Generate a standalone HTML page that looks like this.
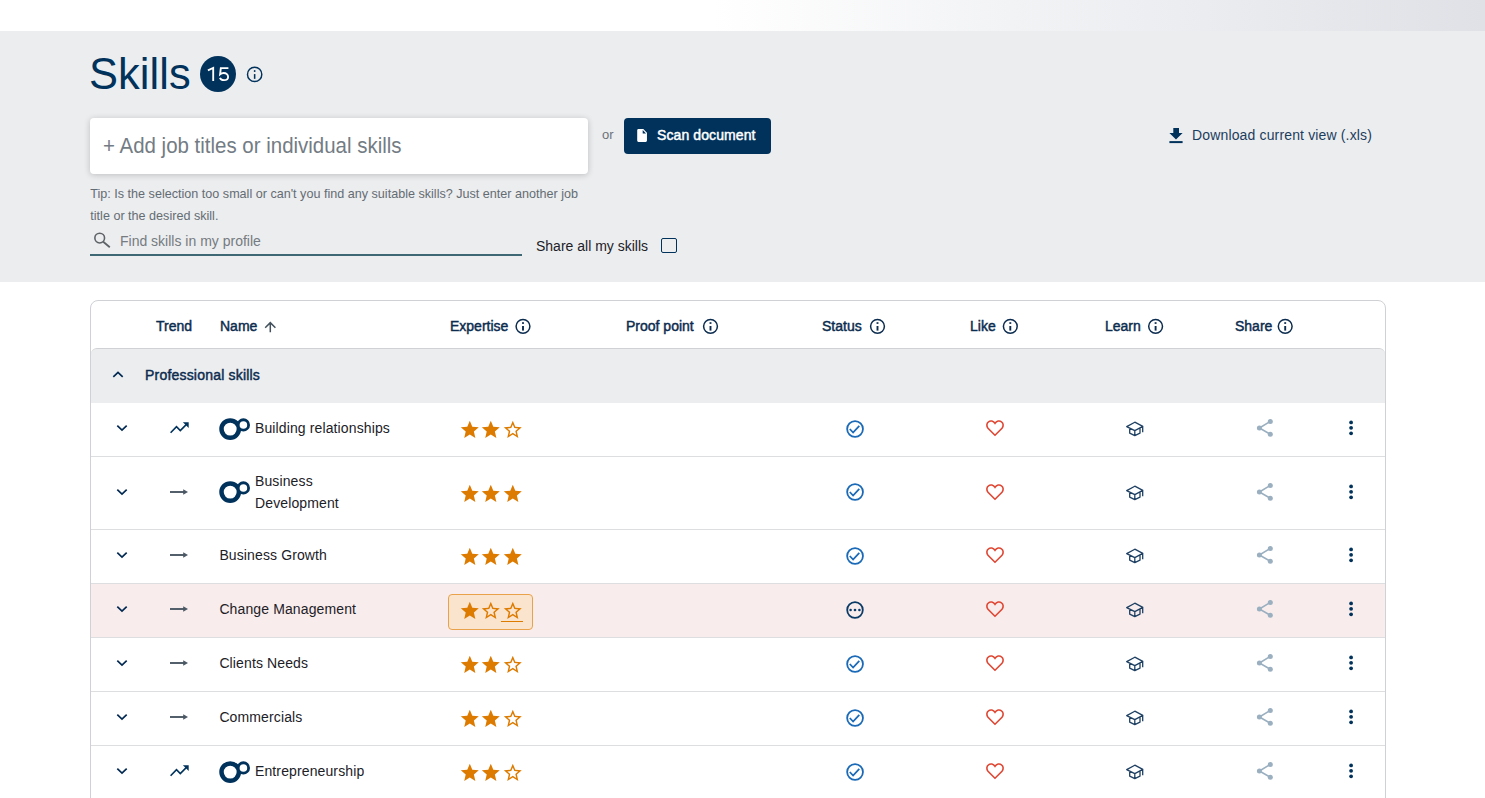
<!DOCTYPE html>
<html><head><meta charset="utf-8"><style>
*{margin:0;padding:0;box-sizing:border-box}
html,body{width:1485px;height:798px;overflow:hidden;background:#fff;font-family:"Liberation Sans",sans-serif}
.ab{position:absolute}
.hdr{font-size:14px;font-weight:400;-webkit-text-stroke:0.45px #0c2c4f;color:#0c2c4f;line-height:20px;white-space:nowrap;letter-spacing:0px}
.name{font-size:14px;color:#1c2127;white-space:nowrap;letter-spacing:0.12px}
</style></head><body>
<div class="ab" style="left:0;top:0;width:1485px;height:31px;background:linear-gradient(to right,#fff 0%,#fff 48%,#f2f3f5 68%,#e9eaee 85%,#dfe1e6 100%)"></div>
<div class="ab" style="left:0;top:31px;width:1485px;height:251px;background:#ecedef"></div>

<div class="ab" style="left:89px;top:46.8px;font-size:45px;line-height:54px;color:#00325b;letter-spacing:0.1px;transform:scaleX(0.965);transform-origin:0 0;white-space:nowrap">Skills</div>
<div class="ab" style="left:200px;top:56px;width:36px;height:36px;border-radius:50%;background:#00325b"></div>
<svg class="ab" style="left:200px;top:56px" width="36" height="36" viewBox="200 56 36 36"><path d="M207.9 70.3L213.2 67.9V80.9" fill="none" stroke="#fff" stroke-width="1.85"/><path d="M228.4 68.1H220.8L220.1 74.3C221.1 73.5 222.2 73.0 223.6 73.0 226.4 73.0 228.1 74.9 228.1 76.9 228.1 79.0 226.4 80.1 224.0 80.1 222.0 80.1 220.6 79.3 219.9 77.8" fill="none" stroke="#fff" stroke-width="1.85"/></svg>
<svg class="ab" style="left:244px;top:64px" width="20" height="20" viewBox="-10.650 -10.400 20 20"><circle cx="0" cy="0" r="7.15" fill="none" stroke="#00325b" stroke-width="1.45"/><rect x="-0.775" y="-4.249" width="1.55" height="1.762" fill="#00325b"/><rect x="-0.775" y="-0.311" width="1.55" height="4.767" fill="#00325b"/></svg>

<div class="ab" style="left:90px;top:118px;width:498px;height:56px;background:#fff;border-radius:4px;box-shadow:0 1px 6px rgba(0,0,0,0.2)"></div>
<div class="ab" style="left:103px;top:133px;font-size:22px;line-height:26px;color:#737c84;white-space:nowrap;transform:scaleX(0.93);transform-origin:0 0">+ Add job titles or individual skills</div>
<div class="ab" style="left:602px;top:127px;font-size:13px;line-height:16px;color:#6b7177">or</div>
<div class="ab" style="left:624px;top:118px;width:147px;height:36px;background:#00325b;border-radius:4px"></div>
<svg class="ab" style="left:634px;top:127px" width="16" height="17" viewBox="0 0 16 17"><g transform="translate(0.76 0.71) scale(0.61 0.645)"><path fill="#fff" d="M6 2c-1.1 0-1.99.9-1.99 2L4 20c0 1.1.89 2 1.99 2H18c1.1 0 2-.9 2-2V8l-6-6H6zm7 7V3.5L18.5 9H13z"/></g></svg>
<div class="ab" style="left:657px;top:126px;font-size:14px;font-weight:400;-webkit-text-stroke:0.45px #fff;line-height:18px;color:#fff;white-space:nowrap;letter-spacing:0.1px">Scan document</div>

<svg class="ab" style="left:1169px;top:127px" width="15" height="17" viewBox="0 0 15 17"><path d="M4.3 0.9H10V6.1H13.6L7 12.4 0.4 6.1H4.3Z" fill="#00325b"/><rect x="0.4" y="14.1" width="13.2" height="2" fill="#00325b"/></svg>
<div class="ab" style="left:1192px;top:126px;font-size:14px;line-height:18px;color:#1c3d5e;white-space:nowrap;letter-spacing:0.15px">Download current view (.xls)</div>

<div class="ab" style="left:90.3px;top:183px;width:520px;font-size:12.6px;line-height:22px;color:#646c73">Tip: Is the selection too small or can't you find any suitable skills? Just enter another job<br>title or the desired skill.</div>

<svg class="ab" style="left:92px;top:230px" width="20" height="20" viewBox="0 0 20 20"><circle cx="7.7" cy="8.1" r="4.85" fill="none" stroke="#5f6368" stroke-width="1.6"/><path d="M11.2 11.7L17.8 17.2" stroke="#5f6368" stroke-width="1.8"/></svg>
<div class="ab" style="left:120px;top:231.5px;font-size:14px;line-height:18px;color:#757b80;white-space:nowrap">Find skills in my profile</div>
<div class="ab" style="left:90px;top:254px;width:432px;height:2px;background:#3e6873"></div>

<div class="ab" style="left:536px;top:236.7px;font-size:14px;line-height:18px;color:#1c2127;white-space:nowrap">Share all my skills</div>
<div class="ab" style="left:660.8px;top:237.6px;width:16.5px;height:15.5px;border:1.8px solid #00325b;border-radius:2px"></div>

<div class="ab" style="left:90px;top:300px;width:1296px;height:520px;border:1px solid #cfd1d4;border-radius:8px;background:#fff"></div>
<div class="ab hdr" style="left:156px;top:316px">Trend</div>
<div class="ab hdr" style="left:220px;top:316px">Name</div>
<div class="ab hdr" style="left:450px;top:316px">Expertise</div>
<div class="ab hdr" style="left:626px;top:316px">Proof point</div>
<div class="ab hdr" style="left:822px;top:316px">Status</div>
<div class="ab hdr" style="left:970px;top:316px">Like</div>
<div class="ab hdr" style="left:1105px;top:316px">Learn</div>
<div class="ab hdr" style="left:1235px;top:316px">Share</div>
<svg class="ab" style="left:263px;top:320px" width="14" height="14" viewBox="0 0 14 14"><path d="M7.3 12.2V3M2.2 7.7L7.3 2.6 12.4 7.7" fill="none" stroke="#44525d" stroke-width="1.5"/></svg>
<svg class="ab" style="left:513px;top:316px" width="20" height="20" viewBox="-10.000 -10.300 20 20"><circle cx="0" cy="0" r="6.9" fill="none" stroke="#0c2c4f" stroke-width="1.5"/><rect x="-0.95" y="-4.100" width="1.9" height="1.700" fill="#0c2c4f"/><rect x="-0.95" y="-0.300" width="1.9" height="4.600" fill="#0c2c4f"/></svg>
<svg class="ab" style="left:700px;top:316px" width="20" height="20" viewBox="-10.500 -10.300 20 20"><circle cx="0" cy="0" r="6.9" fill="none" stroke="#0c2c4f" stroke-width="1.5"/><rect x="-0.95" y="-4.100" width="1.9" height="1.700" fill="#0c2c4f"/><rect x="-0.95" y="-0.300" width="1.9" height="4.600" fill="#0c2c4f"/></svg>
<svg class="ab" style="left:867px;top:316px" width="20" height="20" viewBox="-10.500 -10.300 20 20"><circle cx="0" cy="0" r="6.9" fill="none" stroke="#0c2c4f" stroke-width="1.5"/><rect x="-0.95" y="-4.100" width="1.9" height="1.700" fill="#0c2c4f"/><rect x="-0.95" y="-0.300" width="1.9" height="4.600" fill="#0c2c4f"/></svg>
<svg class="ab" style="left:1000px;top:316px" width="20" height="20" viewBox="-10.300 -10.300 20 20"><circle cx="0" cy="0" r="6.9" fill="none" stroke="#0c2c4f" stroke-width="1.5"/><rect x="-0.95" y="-4.100" width="1.9" height="1.700" fill="#0c2c4f"/><rect x="-0.95" y="-0.300" width="1.9" height="4.600" fill="#0c2c4f"/></svg>
<svg class="ab" style="left:1145px;top:316px" width="20" height="20" viewBox="-10.600 -10.300 20 20"><circle cx="0" cy="0" r="6.9" fill="none" stroke="#0c2c4f" stroke-width="1.5"/><rect x="-0.95" y="-4.100" width="1.9" height="1.700" fill="#0c2c4f"/><rect x="-0.95" y="-0.300" width="1.9" height="4.600" fill="#0c2c4f"/></svg>
<svg class="ab" style="left:1275px;top:316px" width="20" height="20" viewBox="-10.200 -10.300 20 20"><circle cx="0" cy="0" r="6.9" fill="none" stroke="#0c2c4f" stroke-width="1.5"/><rect x="-0.95" y="-4.100" width="1.9" height="1.700" fill="#0c2c4f"/><rect x="-0.95" y="-0.300" width="1.9" height="4.600" fill="#0c2c4f"/></svg>

<div class="ab" style="left:91px;top:348px;width:1294px;height:55px;background:#ecedef;border-top:1px solid #cfd1d4;border-radius:6px 6px 0 0"></div>
<svg class="ab" style="left:112px;top:369px" width="12" height="10" viewBox="0 0 12 10"><path d="M1.3 7.9L6 3.3 10.7 7.9" fill="none" stroke="#002851" stroke-width="1.65"/></svg>
<div class="ab hdr" style="left:145px;top:365px;letter-spacing:0.2px">Professional skills</div>
<div class="ab" style="left:91px;top:403px;width:1294px;height:54px;background:#fff;border-bottom:1px solid #dddedf"></div>
<svg class="ab" style="left:116px;top:424.0px" width="12" height="8" viewBox="0 0 12 8"><path d="M1.3 1.6L6 6.2 10.7 1.6" fill="none" stroke="#002851" stroke-width="1.65"/></svg>
<svg class="ab" style="left:166px;top:418.5px" width="26" height="18" viewBox="166 418 26 18"><path d="M170.6 431.8L176.5 425.7 180.3 429.5 186.2 423.6" fill="none" stroke="#00325b" stroke-width="1.6"/><path d="M182.9 421.3H188.7V427.1Z" fill="#00325b"/></svg>
<svg class="ab" style="left:219px;top:413.8px" width="34" height="30" viewBox="0 0 34 30"><circle cx="11.2" cy="15.1" r="8.7" fill="none" stroke="#00325b" stroke-width="4.5"/><path d="M15.6 21.8L18.4 17.6 18.6 21.8Z" fill="#00325b"/><circle cx="24.4" cy="10.95" r="5.2" fill="#fff" stroke="#00325b" stroke-width="2.8"/></svg>
<div class="ab name" style="left:255px;top:417.0px;line-height:22px">Building relationships</div>
<svg class="ab" style="left:458.6px;top:419.4px" width="21.6" height="21.6" viewBox="0 0 24 24"><path fill="#dd7b00" d="M12 17.27L18.18 21l-1.64-7.03L22 9.24l-7.19-.61L12 2 9.19 8.63 2 9.24l5.46 4.73L5.82 21z"/></svg>
<svg class="ab" style="left:480.3px;top:419.4px" width="21.6" height="21.6" viewBox="0 0 24 24"><path fill="#dd7b00" d="M12 17.27L18.18 21l-1.64-7.03L22 9.24l-7.19-.61L12 2 9.19 8.63 2 9.24l5.46 4.73L5.82 21z"/></svg>
<svg class="ab" style="left:502.0px;top:419.4px" width="21.6" height="21.6" viewBox="0 0 24 24"><path fill="#dd7b00" d="M22 9.24l-7.19-.62L12 2 9.19 8.63 2 9.24l5.46 4.73L5.82 21 12 17.27 18.18 21l-1.63-7.03L22 9.24zM12 15.4l-3.76 2.27 1-4.28-3.32-2.88 4.38-.38L12 6.1l1.71 4.04 4.38.38-3.32 2.88 1 4.28L12 15.4z"/></svg>
<svg class="ab" style="left:844.5px;top:418.6px" width="20" height="20" viewBox="0 0 20 20"><circle cx="10.05" cy="10" r="7.9" fill="none" stroke="#1b6ab8" stroke-width="1.8"/><path d="M4.8 10L8.1 13.5 14.3 6.9" fill="none" stroke="#1b6ab8" stroke-width="1.8"/></svg>
<svg class="ab" style="left:985px;top:419.3px" width="20" height="18" viewBox="0 0 20 18"><path d="M10 16.2L3 9.2C1.3 7.3 1.5 4.2 3.5 2.8 5.5 1.3 8.4 1.8 10 4.3 11.6 1.8 14.5 1.3 16.5 2.8 18.5 4.2 18.7 7.3 17 9.2Z" fill="none" stroke="#df4632" stroke-width="1.6" stroke-linejoin="miter"/></svg>
<svg class="ab" style="left:1124px;top:418.0px" width="22" height="20" viewBox="1124 418 22 20"><path d="M1126.7 426.6L1134.8 422.2 1142.8 426.4 1134.8 430.6Z M1129.7 428V433.2L1134.8 435.6 1140 433.2V428 M1134.8 430.6V435.3 M1142.7 426.4V432.3" fill="none" stroke="#1d3f62" stroke-width="1.3" stroke-linejoin="round"/></svg>
<svg class="ab" style="left:1254px;top:416.0px" width="22" height="24" viewBox="1254 416 22 24"><path d="M1270.3 421.4L1259.4 428 1270.3 434.2" fill="none" stroke="#9aafc0" stroke-width="1.6"/><circle cx="1270.3" cy="421.4" r="2.5" fill="#9aafc0"/><circle cx="1259.4" cy="428" r="2.5" fill="#9aafc0"/><circle cx="1270.3" cy="434.2" r="2.5" fill="#9aafc0"/></svg>
<svg class="ab" style="left:1346px;top:416.0px" width="10" height="24" viewBox="1346 416 10 24"><circle cx="1351.1" cy="422.4" r="1.9" fill="#00325b"/><circle cx="1351.1" cy="427.8" r="1.9" fill="#00325b"/><circle cx="1351.1" cy="433.3" r="1.9" fill="#00325b"/></svg>
<div class="ab" style="left:91px;top:457px;width:1294px;height:73px;background:#fff;border-bottom:1px solid #dddedf"></div>
<svg class="ab" style="left:116px;top:487.5px" width="12" height="8" viewBox="0 0 12 8"><path d="M1.3 1.6L6 6.2 10.7 1.6" fill="none" stroke="#002851" stroke-width="1.65"/></svg>
<svg class="ab" style="left:168px;top:485.5px" width="22" height="12" viewBox="0 0 22 12"><path d="M2 6H17" stroke="#4a5864" stroke-width="1.9"/><path d="M15.2 3.2L20 6 15.2 8.8z" fill="#4a5864"/></svg>
<svg class="ab" style="left:219px;top:477.3px" width="34" height="30" viewBox="0 0 34 30"><circle cx="11.2" cy="15.1" r="8.7" fill="none" stroke="#00325b" stroke-width="4.5"/><path d="M15.6 21.8L18.4 17.6 18.6 21.8Z" fill="#00325b"/><circle cx="24.4" cy="10.95" r="5.2" fill="#fff" stroke="#00325b" stroke-width="2.8"/></svg>
<div class="ab name" style="left:255px;top:470.2px;line-height:22px">Business<br>Development</div>
<svg class="ab" style="left:458.6px;top:482.9px" width="21.6" height="21.6" viewBox="0 0 24 24"><path fill="#dd7b00" d="M12 17.27L18.18 21l-1.64-7.03L22 9.24l-7.19-.61L12 2 9.19 8.63 2 9.24l5.46 4.73L5.82 21z"/></svg>
<svg class="ab" style="left:480.3px;top:482.9px" width="21.6" height="21.6" viewBox="0 0 24 24"><path fill="#dd7b00" d="M12 17.27L18.18 21l-1.64-7.03L22 9.24l-7.19-.61L12 2 9.19 8.63 2 9.24l5.46 4.73L5.82 21z"/></svg>
<svg class="ab" style="left:502.0px;top:482.9px" width="21.6" height="21.6" viewBox="0 0 24 24"><path fill="#dd7b00" d="M12 17.27L18.18 21l-1.64-7.03L22 9.24l-7.19-.61L12 2 9.19 8.63 2 9.24l5.46 4.73L5.82 21z"/></svg>
<svg class="ab" style="left:844.5px;top:482.1px" width="20" height="20" viewBox="0 0 20 20"><circle cx="10.05" cy="10" r="7.9" fill="none" stroke="#1b6ab8" stroke-width="1.8"/><path d="M4.8 10L8.1 13.5 14.3 6.9" fill="none" stroke="#1b6ab8" stroke-width="1.8"/></svg>
<svg class="ab" style="left:985px;top:482.8px" width="20" height="18" viewBox="0 0 20 18"><path d="M10 16.2L3 9.2C1.3 7.3 1.5 4.2 3.5 2.8 5.5 1.3 8.4 1.8 10 4.3 11.6 1.8 14.5 1.3 16.5 2.8 18.5 4.2 18.7 7.3 17 9.2Z" fill="none" stroke="#df4632" stroke-width="1.6" stroke-linejoin="miter"/></svg>
<svg class="ab" style="left:1124px;top:481.5px" width="22" height="20" viewBox="1124 418 22 20"><path d="M1126.7 426.6L1134.8 422.2 1142.8 426.4 1134.8 430.6Z M1129.7 428V433.2L1134.8 435.6 1140 433.2V428 M1134.8 430.6V435.3 M1142.7 426.4V432.3" fill="none" stroke="#1d3f62" stroke-width="1.3" stroke-linejoin="round"/></svg>
<svg class="ab" style="left:1254px;top:479.5px" width="22" height="24" viewBox="1254 416 22 24"><path d="M1270.3 421.4L1259.4 428 1270.3 434.2" fill="none" stroke="#9aafc0" stroke-width="1.6"/><circle cx="1270.3" cy="421.4" r="2.5" fill="#9aafc0"/><circle cx="1259.4" cy="428" r="2.5" fill="#9aafc0"/><circle cx="1270.3" cy="434.2" r="2.5" fill="#9aafc0"/></svg>
<svg class="ab" style="left:1346px;top:479.5px" width="10" height="24" viewBox="1346 416 10 24"><circle cx="1351.1" cy="422.4" r="1.9" fill="#00325b"/><circle cx="1351.1" cy="427.8" r="1.9" fill="#00325b"/><circle cx="1351.1" cy="433.3" r="1.9" fill="#00325b"/></svg>
<div class="ab" style="left:91px;top:530px;width:1294px;height:54px;background:#fff;border-bottom:1px solid #dddedf"></div>
<svg class="ab" style="left:116px;top:551.0px" width="12" height="8" viewBox="0 0 12 8"><path d="M1.3 1.6L6 6.2 10.7 1.6" fill="none" stroke="#002851" stroke-width="1.65"/></svg>
<svg class="ab" style="left:168px;top:549.0px" width="22" height="12" viewBox="0 0 22 12"><path d="M2 6H17" stroke="#4a5864" stroke-width="1.9"/><path d="M15.2 3.2L20 6 15.2 8.8z" fill="#4a5864"/></svg>
<div class="ab name" style="left:219.4px;top:544.0px;line-height:22px">Business Growth</div>
<svg class="ab" style="left:458.6px;top:546.4px" width="21.6" height="21.6" viewBox="0 0 24 24"><path fill="#dd7b00" d="M12 17.27L18.18 21l-1.64-7.03L22 9.24l-7.19-.61L12 2 9.19 8.63 2 9.24l5.46 4.73L5.82 21z"/></svg>
<svg class="ab" style="left:480.3px;top:546.4px" width="21.6" height="21.6" viewBox="0 0 24 24"><path fill="#dd7b00" d="M12 17.27L18.18 21l-1.64-7.03L22 9.24l-7.19-.61L12 2 9.19 8.63 2 9.24l5.46 4.73L5.82 21z"/></svg>
<svg class="ab" style="left:502.0px;top:546.4px" width="21.6" height="21.6" viewBox="0 0 24 24"><path fill="#dd7b00" d="M12 17.27L18.18 21l-1.64-7.03L22 9.24l-7.19-.61L12 2 9.19 8.63 2 9.24l5.46 4.73L5.82 21z"/></svg>
<svg class="ab" style="left:844.5px;top:545.6px" width="20" height="20" viewBox="0 0 20 20"><circle cx="10.05" cy="10" r="7.9" fill="none" stroke="#1b6ab8" stroke-width="1.8"/><path d="M4.8 10L8.1 13.5 14.3 6.9" fill="none" stroke="#1b6ab8" stroke-width="1.8"/></svg>
<svg class="ab" style="left:985px;top:546.3px" width="20" height="18" viewBox="0 0 20 18"><path d="M10 16.2L3 9.2C1.3 7.3 1.5 4.2 3.5 2.8 5.5 1.3 8.4 1.8 10 4.3 11.6 1.8 14.5 1.3 16.5 2.8 18.5 4.2 18.7 7.3 17 9.2Z" fill="none" stroke="#df4632" stroke-width="1.6" stroke-linejoin="miter"/></svg>
<svg class="ab" style="left:1124px;top:545.0px" width="22" height="20" viewBox="1124 418 22 20"><path d="M1126.7 426.6L1134.8 422.2 1142.8 426.4 1134.8 430.6Z M1129.7 428V433.2L1134.8 435.6 1140 433.2V428 M1134.8 430.6V435.3 M1142.7 426.4V432.3" fill="none" stroke="#1d3f62" stroke-width="1.3" stroke-linejoin="round"/></svg>
<svg class="ab" style="left:1254px;top:543.0px" width="22" height="24" viewBox="1254 416 22 24"><path d="M1270.3 421.4L1259.4 428 1270.3 434.2" fill="none" stroke="#9aafc0" stroke-width="1.6"/><circle cx="1270.3" cy="421.4" r="2.5" fill="#9aafc0"/><circle cx="1259.4" cy="428" r="2.5" fill="#9aafc0"/><circle cx="1270.3" cy="434.2" r="2.5" fill="#9aafc0"/></svg>
<svg class="ab" style="left:1346px;top:543.0px" width="10" height="24" viewBox="1346 416 10 24"><circle cx="1351.1" cy="422.4" r="1.9" fill="#00325b"/><circle cx="1351.1" cy="427.8" r="1.9" fill="#00325b"/><circle cx="1351.1" cy="433.3" r="1.9" fill="#00325b"/></svg>
<div class="ab" style="left:91px;top:584px;width:1294px;height:54px;background:#f9ecec;border-bottom:1px solid #dddedf"></div>
<svg class="ab" style="left:116px;top:605.0px" width="12" height="8" viewBox="0 0 12 8"><path d="M1.3 1.6L6 6.2 10.7 1.6" fill="none" stroke="#002851" stroke-width="1.65"/></svg>
<svg class="ab" style="left:168px;top:603.0px" width="22" height="12" viewBox="0 0 22 12"><path d="M2 6H17" stroke="#4a5864" stroke-width="1.9"/><path d="M15.2 3.2L20 6 15.2 8.8z" fill="#4a5864"/></svg>
<div class="ab name" style="left:219.4px;top:598.0px;line-height:22px">Change Management</div>
<div class="ab" style="left:448px;top:594.0px;width:85px;height:36px;border:1px solid #e9a24a;background:#fbe4ce;border-radius:4px"></div>
<div class="ab" style="left:501px;top:620.8px;width:22px;height:1.2px;background:#dd7b00"></div>
<svg class="ab" style="left:458.6px;top:599.5px" width="21.6" height="21.6" viewBox="0 0 24 24"><path fill="#dd7b00" d="M12 17.27L18.18 21l-1.64-7.03L22 9.24l-7.19-.61L12 2 9.19 8.63 2 9.24l5.46 4.73L5.82 21z"/></svg>
<svg class="ab" style="left:480.3px;top:599.5px" width="21.6" height="21.6" viewBox="0 0 24 24"><path fill="#dd7b00" d="M22 9.24l-7.19-.62L12 2 9.19 8.63 2 9.24l5.46 4.73L5.82 21 12 17.27 18.18 21l-1.63-7.03L22 9.24zM12 15.4l-3.76 2.27 1-4.28-3.32-2.88 4.38-.38L12 6.1l1.71 4.04 4.38.38-3.32 2.88 1 4.28L12 15.4z"/></svg>
<svg class="ab" style="left:502.0px;top:599.5px" width="21.6" height="21.6" viewBox="0 0 24 24"><path fill="#dd7b00" d="M22 9.24l-7.19-.62L12 2 9.19 8.63 2 9.24l5.46 4.73L5.82 21 12 17.27 18.18 21l-1.63-7.03L22 9.24zM12 15.4l-3.76 2.27 1-4.28-3.32-2.88 4.38-.38L12 6.1l1.71 4.04 4.38.38-3.32 2.88 1 4.28L12 15.4z"/></svg>
<svg class="ab" style="left:844.5px;top:600.0px" width="20" height="20" viewBox="0 0 20 20"><circle cx="10" cy="10" r="7.8" fill="none" stroke="#0a3a66" stroke-width="1.8"/><circle cx="5.6" cy="10" r="1.3" fill="#0a3a66"/><circle cx="10" cy="10" r="1.3" fill="#0a3a66"/><circle cx="14.4" cy="10" r="1.3" fill="#0a3a66"/></svg>
<svg class="ab" style="left:985px;top:600.3px" width="20" height="18" viewBox="0 0 20 18"><path d="M10 16.2L3 9.2C1.3 7.3 1.5 4.2 3.5 2.8 5.5 1.3 8.4 1.8 10 4.3 11.6 1.8 14.5 1.3 16.5 2.8 18.5 4.2 18.7 7.3 17 9.2Z" fill="none" stroke="#df4632" stroke-width="1.6" stroke-linejoin="miter"/></svg>
<svg class="ab" style="left:1124px;top:599.0px" width="22" height="20" viewBox="1124 418 22 20"><path d="M1126.7 426.6L1134.8 422.2 1142.8 426.4 1134.8 430.6Z M1129.7 428V433.2L1134.8 435.6 1140 433.2V428 M1134.8 430.6V435.3 M1142.7 426.4V432.3" fill="none" stroke="#1d3f62" stroke-width="1.3" stroke-linejoin="round"/></svg>
<svg class="ab" style="left:1254px;top:597.0px" width="22" height="24" viewBox="1254 416 22 24"><path d="M1270.3 421.4L1259.4 428 1270.3 434.2" fill="none" stroke="#9aafc0" stroke-width="1.6"/><circle cx="1270.3" cy="421.4" r="2.5" fill="#9aafc0"/><circle cx="1259.4" cy="428" r="2.5" fill="#9aafc0"/><circle cx="1270.3" cy="434.2" r="2.5" fill="#9aafc0"/></svg>
<svg class="ab" style="left:1346px;top:597.0px" width="10" height="24" viewBox="1346 416 10 24"><circle cx="1351.1" cy="422.4" r="1.9" fill="#00325b"/><circle cx="1351.1" cy="427.8" r="1.9" fill="#00325b"/><circle cx="1351.1" cy="433.3" r="1.9" fill="#00325b"/></svg>
<div class="ab" style="left:91px;top:638px;width:1294px;height:54px;background:#fff;border-bottom:1px solid #dddedf"></div>
<svg class="ab" style="left:116px;top:659.0px" width="12" height="8" viewBox="0 0 12 8"><path d="M1.3 1.6L6 6.2 10.7 1.6" fill="none" stroke="#002851" stroke-width="1.65"/></svg>
<svg class="ab" style="left:168px;top:657.0px" width="22" height="12" viewBox="0 0 22 12"><path d="M2 6H17" stroke="#4a5864" stroke-width="1.9"/><path d="M15.2 3.2L20 6 15.2 8.8z" fill="#4a5864"/></svg>
<div class="ab name" style="left:219.4px;top:652.0px;line-height:22px">Clients Needs</div>
<svg class="ab" style="left:458.6px;top:654.4px" width="21.6" height="21.6" viewBox="0 0 24 24"><path fill="#dd7b00" d="M12 17.27L18.18 21l-1.64-7.03L22 9.24l-7.19-.61L12 2 9.19 8.63 2 9.24l5.46 4.73L5.82 21z"/></svg>
<svg class="ab" style="left:480.3px;top:654.4px" width="21.6" height="21.6" viewBox="0 0 24 24"><path fill="#dd7b00" d="M12 17.27L18.18 21l-1.64-7.03L22 9.24l-7.19-.61L12 2 9.19 8.63 2 9.24l5.46 4.73L5.82 21z"/></svg>
<svg class="ab" style="left:502.0px;top:654.4px" width="21.6" height="21.6" viewBox="0 0 24 24"><path fill="#dd7b00" d="M22 9.24l-7.19-.62L12 2 9.19 8.63 2 9.24l5.46 4.73L5.82 21 12 17.27 18.18 21l-1.63-7.03L22 9.24zM12 15.4l-3.76 2.27 1-4.28-3.32-2.88 4.38-.38L12 6.1l1.71 4.04 4.38.38-3.32 2.88 1 4.28L12 15.4z"/></svg>
<svg class="ab" style="left:844.5px;top:653.6px" width="20" height="20" viewBox="0 0 20 20"><circle cx="10.05" cy="10" r="7.9" fill="none" stroke="#1b6ab8" stroke-width="1.8"/><path d="M4.8 10L8.1 13.5 14.3 6.9" fill="none" stroke="#1b6ab8" stroke-width="1.8"/></svg>
<svg class="ab" style="left:985px;top:654.3px" width="20" height="18" viewBox="0 0 20 18"><path d="M10 16.2L3 9.2C1.3 7.3 1.5 4.2 3.5 2.8 5.5 1.3 8.4 1.8 10 4.3 11.6 1.8 14.5 1.3 16.5 2.8 18.5 4.2 18.7 7.3 17 9.2Z" fill="none" stroke="#df4632" stroke-width="1.6" stroke-linejoin="miter"/></svg>
<svg class="ab" style="left:1124px;top:653.0px" width="22" height="20" viewBox="1124 418 22 20"><path d="M1126.7 426.6L1134.8 422.2 1142.8 426.4 1134.8 430.6Z M1129.7 428V433.2L1134.8 435.6 1140 433.2V428 M1134.8 430.6V435.3 M1142.7 426.4V432.3" fill="none" stroke="#1d3f62" stroke-width="1.3" stroke-linejoin="round"/></svg>
<svg class="ab" style="left:1254px;top:651.0px" width="22" height="24" viewBox="1254 416 22 24"><path d="M1270.3 421.4L1259.4 428 1270.3 434.2" fill="none" stroke="#9aafc0" stroke-width="1.6"/><circle cx="1270.3" cy="421.4" r="2.5" fill="#9aafc0"/><circle cx="1259.4" cy="428" r="2.5" fill="#9aafc0"/><circle cx="1270.3" cy="434.2" r="2.5" fill="#9aafc0"/></svg>
<svg class="ab" style="left:1346px;top:651.0px" width="10" height="24" viewBox="1346 416 10 24"><circle cx="1351.1" cy="422.4" r="1.9" fill="#00325b"/><circle cx="1351.1" cy="427.8" r="1.9" fill="#00325b"/><circle cx="1351.1" cy="433.3" r="1.9" fill="#00325b"/></svg>
<div class="ab" style="left:91px;top:692px;width:1294px;height:54px;background:#fff;border-bottom:1px solid #dddedf"></div>
<svg class="ab" style="left:116px;top:713.0px" width="12" height="8" viewBox="0 0 12 8"><path d="M1.3 1.6L6 6.2 10.7 1.6" fill="none" stroke="#002851" stroke-width="1.65"/></svg>
<svg class="ab" style="left:168px;top:711.0px" width="22" height="12" viewBox="0 0 22 12"><path d="M2 6H17" stroke="#4a5864" stroke-width="1.9"/><path d="M15.2 3.2L20 6 15.2 8.8z" fill="#4a5864"/></svg>
<div class="ab name" style="left:219.4px;top:706.0px;line-height:22px">Commercials</div>
<svg class="ab" style="left:458.6px;top:708.4px" width="21.6" height="21.6" viewBox="0 0 24 24"><path fill="#dd7b00" d="M12 17.27L18.18 21l-1.64-7.03L22 9.24l-7.19-.61L12 2 9.19 8.63 2 9.24l5.46 4.73L5.82 21z"/></svg>
<svg class="ab" style="left:480.3px;top:708.4px" width="21.6" height="21.6" viewBox="0 0 24 24"><path fill="#dd7b00" d="M12 17.27L18.18 21l-1.64-7.03L22 9.24l-7.19-.61L12 2 9.19 8.63 2 9.24l5.46 4.73L5.82 21z"/></svg>
<svg class="ab" style="left:502.0px;top:708.4px" width="21.6" height="21.6" viewBox="0 0 24 24"><path fill="#dd7b00" d="M22 9.24l-7.19-.62L12 2 9.19 8.63 2 9.24l5.46 4.73L5.82 21 12 17.27 18.18 21l-1.63-7.03L22 9.24zM12 15.4l-3.76 2.27 1-4.28-3.32-2.88 4.38-.38L12 6.1l1.71 4.04 4.38.38-3.32 2.88 1 4.28L12 15.4z"/></svg>
<svg class="ab" style="left:844.5px;top:707.6px" width="20" height="20" viewBox="0 0 20 20"><circle cx="10.05" cy="10" r="7.9" fill="none" stroke="#1b6ab8" stroke-width="1.8"/><path d="M4.8 10L8.1 13.5 14.3 6.9" fill="none" stroke="#1b6ab8" stroke-width="1.8"/></svg>
<svg class="ab" style="left:985px;top:708.3px" width="20" height="18" viewBox="0 0 20 18"><path d="M10 16.2L3 9.2C1.3 7.3 1.5 4.2 3.5 2.8 5.5 1.3 8.4 1.8 10 4.3 11.6 1.8 14.5 1.3 16.5 2.8 18.5 4.2 18.7 7.3 17 9.2Z" fill="none" stroke="#df4632" stroke-width="1.6" stroke-linejoin="miter"/></svg>
<svg class="ab" style="left:1124px;top:707.0px" width="22" height="20" viewBox="1124 418 22 20"><path d="M1126.7 426.6L1134.8 422.2 1142.8 426.4 1134.8 430.6Z M1129.7 428V433.2L1134.8 435.6 1140 433.2V428 M1134.8 430.6V435.3 M1142.7 426.4V432.3" fill="none" stroke="#1d3f62" stroke-width="1.3" stroke-linejoin="round"/></svg>
<svg class="ab" style="left:1254px;top:705.0px" width="22" height="24" viewBox="1254 416 22 24"><path d="M1270.3 421.4L1259.4 428 1270.3 434.2" fill="none" stroke="#9aafc0" stroke-width="1.6"/><circle cx="1270.3" cy="421.4" r="2.5" fill="#9aafc0"/><circle cx="1259.4" cy="428" r="2.5" fill="#9aafc0"/><circle cx="1270.3" cy="434.2" r="2.5" fill="#9aafc0"/></svg>
<svg class="ab" style="left:1346px;top:705.0px" width="10" height="24" viewBox="1346 416 10 24"><circle cx="1351.1" cy="422.4" r="1.9" fill="#00325b"/><circle cx="1351.1" cy="427.8" r="1.9" fill="#00325b"/><circle cx="1351.1" cy="433.3" r="1.9" fill="#00325b"/></svg>
<div class="ab" style="left:91px;top:746px;width:1294px;height:54px;background:#fff;border-bottom:1px solid #dddedf"></div>
<svg class="ab" style="left:116px;top:767.0px" width="12" height="8" viewBox="0 0 12 8"><path d="M1.3 1.6L6 6.2 10.7 1.6" fill="none" stroke="#002851" stroke-width="1.65"/></svg>
<svg class="ab" style="left:166px;top:761.5px" width="26" height="18" viewBox="166 418 26 18"><path d="M170.6 431.8L176.5 425.7 180.3 429.5 186.2 423.6" fill="none" stroke="#00325b" stroke-width="1.6"/><path d="M182.9 421.3H188.7V427.1Z" fill="#00325b"/></svg>
<svg class="ab" style="left:219px;top:756.8px" width="34" height="30" viewBox="0 0 34 30"><circle cx="11.2" cy="15.1" r="8.7" fill="none" stroke="#00325b" stroke-width="4.5"/><path d="M15.6 21.8L18.4 17.6 18.6 21.8Z" fill="#00325b"/><circle cx="24.4" cy="10.95" r="5.2" fill="#fff" stroke="#00325b" stroke-width="2.8"/></svg>
<div class="ab name" style="left:255px;top:760.0px;line-height:22px">Entrepreneurship</div>
<svg class="ab" style="left:458.6px;top:762.4px" width="21.6" height="21.6" viewBox="0 0 24 24"><path fill="#dd7b00" d="M12 17.27L18.18 21l-1.64-7.03L22 9.24l-7.19-.61L12 2 9.19 8.63 2 9.24l5.46 4.73L5.82 21z"/></svg>
<svg class="ab" style="left:480.3px;top:762.4px" width="21.6" height="21.6" viewBox="0 0 24 24"><path fill="#dd7b00" d="M12 17.27L18.18 21l-1.64-7.03L22 9.24l-7.19-.61L12 2 9.19 8.63 2 9.24l5.46 4.73L5.82 21z"/></svg>
<svg class="ab" style="left:502.0px;top:762.4px" width="21.6" height="21.6" viewBox="0 0 24 24"><path fill="#dd7b00" d="M22 9.24l-7.19-.62L12 2 9.19 8.63 2 9.24l5.46 4.73L5.82 21 12 17.27 18.18 21l-1.63-7.03L22 9.24zM12 15.4l-3.76 2.27 1-4.28-3.32-2.88 4.38-.38L12 6.1l1.71 4.04 4.38.38-3.32 2.88 1 4.28L12 15.4z"/></svg>
<svg class="ab" style="left:844.5px;top:761.6px" width="20" height="20" viewBox="0 0 20 20"><circle cx="10.05" cy="10" r="7.9" fill="none" stroke="#1b6ab8" stroke-width="1.8"/><path d="M4.8 10L8.1 13.5 14.3 6.9" fill="none" stroke="#1b6ab8" stroke-width="1.8"/></svg>
<svg class="ab" style="left:985px;top:762.3px" width="20" height="18" viewBox="0 0 20 18"><path d="M10 16.2L3 9.2C1.3 7.3 1.5 4.2 3.5 2.8 5.5 1.3 8.4 1.8 10 4.3 11.6 1.8 14.5 1.3 16.5 2.8 18.5 4.2 18.7 7.3 17 9.2Z" fill="none" stroke="#df4632" stroke-width="1.6" stroke-linejoin="miter"/></svg>
<svg class="ab" style="left:1124px;top:761.0px" width="22" height="20" viewBox="1124 418 22 20"><path d="M1126.7 426.6L1134.8 422.2 1142.8 426.4 1134.8 430.6Z M1129.7 428V433.2L1134.8 435.6 1140 433.2V428 M1134.8 430.6V435.3 M1142.7 426.4V432.3" fill="none" stroke="#1d3f62" stroke-width="1.3" stroke-linejoin="round"/></svg>
<svg class="ab" style="left:1254px;top:759.0px" width="22" height="24" viewBox="1254 416 22 24"><path d="M1270.3 421.4L1259.4 428 1270.3 434.2" fill="none" stroke="#9aafc0" stroke-width="1.6"/><circle cx="1270.3" cy="421.4" r="2.5" fill="#9aafc0"/><circle cx="1259.4" cy="428" r="2.5" fill="#9aafc0"/><circle cx="1270.3" cy="434.2" r="2.5" fill="#9aafc0"/></svg>
<svg class="ab" style="left:1346px;top:759.0px" width="10" height="24" viewBox="1346 416 10 24"><circle cx="1351.1" cy="422.4" r="1.9" fill="#00325b"/><circle cx="1351.1" cy="427.8" r="1.9" fill="#00325b"/><circle cx="1351.1" cy="433.3" r="1.9" fill="#00325b"/></svg>
</body></html>
